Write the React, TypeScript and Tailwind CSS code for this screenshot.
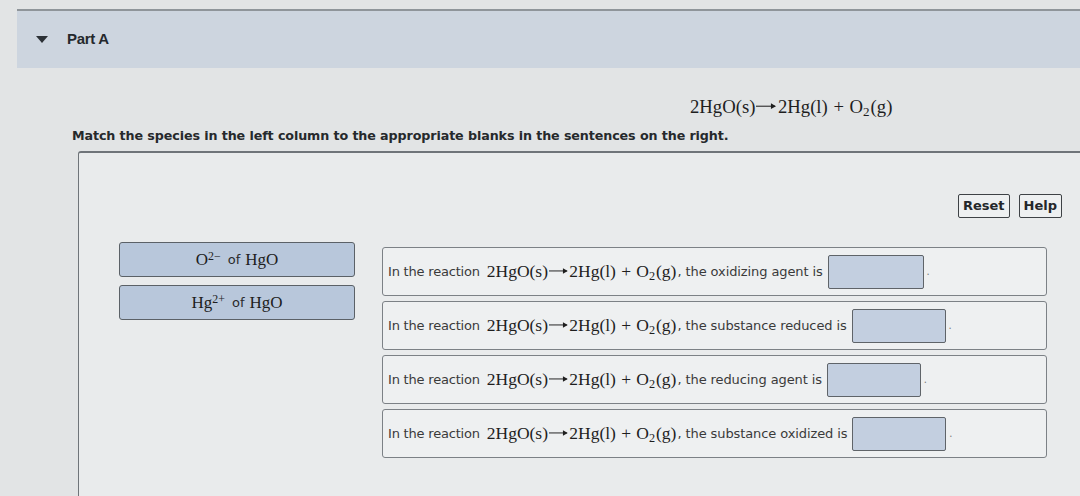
import React from "react";

const serif = "font-['Liberation_Serif',serif]";
const sans = "font-['DejaVu_Sans',sans-serif]";

const Arrow = () => (
  <svg viewBox="0 0 20 8" className="mx-[1px] inline-block h-[0.45em] w-[1.1em] align-[0.15em]">
    <path d="M0 4 H18.5" stroke="#1e1e1e" strokeWidth="1" fill="none" />
    <path d="M14.5 1.2 L19.5 4 L14.5 6.8 Z" fill="#1e1e1e" />
  </svg>
);

const Equation = ({ size = "text-[16px]" }: { size?: string }) => (
  <span className={`${serif} ${size} text-[#1e1e1e] whitespace-nowrap`}>
    2HgO(s)
    <Arrow />
    2Hg(l)<span className="mx-[0.3em]">+</span>O
    <span className="inline-block translate-y-[0.22em] text-[0.7em]">2</span>
    <span className="ml-[1px]">(g)</span>
  </span>
);

const sentences = [
  { tail: "the oxidizing agent is", box: "w-[96px]" },
  { tail: "the substance reduced is", box: "w-[94px]" },
  { tail: "the reducing agent is", box: "w-[94px]" },
  { tail: "the substance oxidized is", box: "w-[94px]" },
];

const Sentence = ({ tail, box }: { tail: string; box: string }) => (
  <div className="flex h-[49px] items-center rounded-[3px] border border-[#7c8186] bg-[#eef0f1] pl-[5px] pr-2">
    <span className={`${sans} text-[13px] tracking-[-0.2px] text-[#3a3a3a] whitespace-nowrap`}>In the reaction</span>
    <span className="ml-[7px]">
      <Equation size="text-[17.5px]" />
    </span>
    <span className={`${sans} ml-[1px] text-[13px] tracking-[-0.1px] text-[#3a3a3a] whitespace-nowrap`}>, {tail}</span>
    <div className={`ml-[5px] h-[34px] ${box} rounded-[2px] border border-[#5f6469] bg-[#c3cfe0]`} />
    <span className="ml-[3px] text-[10px] text-[#777]">.</span>
  </div>
);

const Chip = ({ ion, sup }: { ion: string; sup: string }) => (
  <div className="flex h-[35px] items-center justify-center rounded-[3px] border border-[#5b6167] bg-[#b8c7db]">
    <span className={`${serif} text-[17px] text-[#1e1e1e]`}>
      {ion}
      <span className="inline-block -translate-y-[0.45em] text-[0.7em]">{sup}</span>
    </span>
    <span className={`${sans} ml-[7px] text-[13px] text-[#2a2a2a]`}>of</span>
    <span className={`${serif} ml-[5px] text-[17px] text-[#1e1e1e]`}>HgO</span>
  </div>
);

export default function App() {
  return (
    <div className="h-[496px] w-[1080px] overflow-hidden bg-[#e2e4e5] pt-[9px]">
      <div className="ml-[17px] flex h-[59px] items-center border-t-2 border-[#8f959a] bg-[#cdd5df] pl-[19px]">
        <span className="mr-[19px] h-0 w-0 border-x-[6px] border-t-[7px] border-x-transparent border-t-[#2c3136]" />
        <span className="font-['Liberation_Sans',sans-serif] text-[15px] font-bold tracking-[-0.3px] text-[#25292d]">
          Part A
        </span>
      </div>

      <div className="mt-[25px] pl-[690px]">
        <Equation size="text-[18.7px]" />
      </div>

      <p className={`${sans} mt-[5px] pl-[72px] text-[12.7px] font-bold tracking-[-0.1px] text-[#26292c]`}>
        Match the species in the left column to the appropriate blanks in the sentences on the right.
      </p>

      <div className="ml-[78px] mt-[6px] h-[400px] w-[1020px] rounded-tl-[3px] border-l border-t-2 border-[#6f7479] bg-[#e9ebec]">
        <div className="flex justify-end gap-[9px] pr-[36px] pt-[41px]">
          <button className={`${sans} h-[24px] rounded-[2px] border border-[#3e4246] bg-[#eef0f1] px-[4px] text-[13px] font-bold text-[#24272a]`}>
            Reset
          </button>
          <button className={`${sans} h-[24px] rounded-[2px] border border-[#3e4246] bg-[#eef0f1] px-[4px] text-[13px] font-bold text-[#24272a]`}>
            Help
          </button>
        </div>

        <div className="mt-[24px] flex items-start pl-[40px]">
          <div className="flex w-[236px] flex-col gap-[8px]">
            <Chip ion="O" sup="2−" />
            <Chip ion="Hg" sup="2+" />
          </div>
          <div className="ml-[27px] mt-[5px] flex w-[665px] flex-col gap-[5px]">
            {sentences.map((s) => (
              <Sentence key={s.tail} tail={s.tail} box={s.box} />
            ))}
          </div>
        </div>
      </div>
    </div>
  );
}
